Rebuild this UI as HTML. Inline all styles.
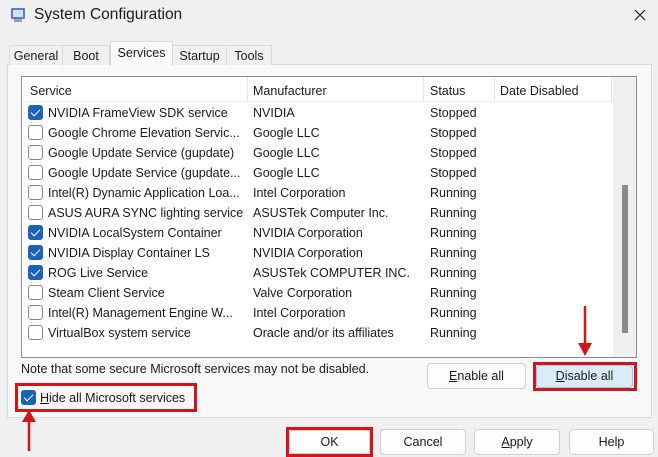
<!DOCTYPE html>
<html><head><style>
*{margin:0;padding:0;box-sizing:border-box}
body{width:658px;height:457px;background:#f0f0f0;font-family:"Liberation Sans",sans-serif;font-size:12.5px;color:#1a1a1a;position:relative;overflow:hidden}
.a{position:absolute}
.tab{position:absolute;top:45px;height:20px;border:1px solid #d9d9d9;border-bottom:none;background:#f0f0f0;padding:3px 0 0;text-align:center;font-size:12.5px}
.panel{position:absolute;left:7px;top:64px;width:645px;height:354px;background:#f9f9f9;border:1px solid #dadada}
.list{position:absolute;left:21px;top:76px;width:616px;height:282px;background:#fff;border:1px solid #8a8a8a}
.row{position:absolute;left:0;height:20px;width:590px}
.row span{position:absolute;top:3px;white-space:nowrap}
.cb{position:absolute;left:6px;top:2px;width:15px;height:15px;border:1px solid #8a8a8a;border-radius:3px;background:#fff}
.cb.on{background:#1a63b8;border-color:#1a63b8}
.cb.on::after{content:"";position:absolute;left:4px;top:1px;width:4px;height:8px;border:solid #fff;border-width:0 1.5px 1.5px 0;transform:rotate(45deg)}
.btn{position:absolute;height:26px;border:1px solid #d0d0d0;border-radius:4px;background:#fdfdfd;text-align:center;line-height:24px;font-size:12.5px}
.red{position:absolute;border:3px solid #d2141b}
</style></head><body>
<svg class="a" style="left:9px;top:7px" width="18" height="17" viewBox="0 0 18 17"><rect x="2" y="1" width="14" height="11" fill="#5a7fc0" rx="1"/><rect x="4" y="3" width="10" height="7" fill="#cfe0f7"/><rect x="5" y="12" width="8" height="3" fill="#8da0c0"/></svg>
<div class="a" style="left:34px;top:6px;font-size:15.5px">System Configuration</div>
<svg class="a" style="left:634px;top:9px" width="12" height="12"><path d="M1 1L11 11M11 1L1 11" stroke="#222" stroke-width="1.2"/></svg>
<div class="panel"></div>
<div class="tab" style="left:9px;width:54px">General</div>
<div class="tab" style="left:62px;width:48px">Boot</div>
<div class="tab" style="left:172px;width:55px">Startup</div>
<div class="tab" style="left:226px;width:46px">Tools</div>
<div class="tab" style="left:110px;top:41px;height:25px;width:63px;background:#f9f9f9;padding-top:4px">Services</div>
<div class="list">
<div class="a" style="left:0;top:0;width:590px;height:25px;border-bottom:1px solid #f0f0f0"></div>
<div class="a" style="left:8px;top:7px">Service</div>
<div class="a" style="left:225px;top:0;height:25px;border-left:1px solid #e5e5e5"></div>
<div class="a" style="left:231px;top:7px">Manufacturer</div>
<div class="a" style="left:401px;top:0;height:25px;border-left:1px solid #e5e5e5"></div>
<div class="a" style="left:408px;top:7px">Status</div>
<div class="a" style="left:472px;top:0;height:25px;border-left:1px solid #e5e5e5"></div>
<div class="a" style="left:478px;top:7px">Date Disabled</div>
<div class="a" style="left:589px;top:0;height:25px;border-left:1px solid #e5e5e5"></div>
<div class="a" style="left:591px;top:0;width:23px;height:280px;background:#f0f0f0"></div>
<div class="a" style="left:600px;top:108px;width:6px;height:148px;background:#8a8a8a"></div>
<div class="row" style="top:26px"><div class="cb on"></div><span style="left:26px">NVIDIA FrameView SDK service</span><span style="left:231px">NVIDIA</span><span style="left:408px">Stopped</span></div>
<div class="row" style="top:46px"><div class="cb"></div><span style="left:26px">Google Chrome Elevation Servic...</span><span style="left:231px">Google LLC</span><span style="left:408px">Stopped</span></div>
<div class="row" style="top:66px"><div class="cb"></div><span style="left:26px">Google Update Service (gupdate)</span><span style="left:231px">Google LLC</span><span style="left:408px">Stopped</span></div>
<div class="row" style="top:86px"><div class="cb"></div><span style="left:26px">Google Update Service (gupdate...</span><span style="left:231px">Google LLC</span><span style="left:408px">Stopped</span></div>
<div class="row" style="top:106px"><div class="cb"></div><span style="left:26px">Intel(R) Dynamic Application Loa...</span><span style="left:231px">Intel Corporation</span><span style="left:408px">Running</span></div>
<div class="row" style="top:126px"><div class="cb"></div><span style="left:26px">ASUS AURA SYNC lighting service</span><span style="left:231px">ASUSTek Computer Inc.</span><span style="left:408px">Running</span></div>
<div class="row" style="top:146px"><div class="cb on"></div><span style="left:26px">NVIDIA LocalSystem Container</span><span style="left:231px">NVIDIA Corporation</span><span style="left:408px">Running</span></div>
<div class="row" style="top:166px"><div class="cb on"></div><span style="left:26px">NVIDIA Display Container LS</span><span style="left:231px">NVIDIA Corporation</span><span style="left:408px">Running</span></div>
<div class="row" style="top:186px"><div class="cb on"></div><span style="left:26px">ROG Live Service</span><span style="left:231px">ASUSTek COMPUTER INC.</span><span style="left:408px">Running</span></div>
<div class="row" style="top:206px"><div class="cb"></div><span style="left:26px">Steam Client Service</span><span style="left:231px">Valve Corporation</span><span style="left:408px">Running</span></div>
<div class="row" style="top:226px"><div class="cb"></div><span style="left:26px">Intel(R) Management Engine W...</span><span style="left:231px">Intel Corporation</span><span style="left:408px">Running</span></div>
<div class="row" style="top:246px"><div class="cb"></div><span style="left:26px">VirtualBox system service</span><span style="left:231px">Oracle and/or its affiliates</span><span style="left:408px">Running</span></div>
</div>
<div class="a" style="left:21px;top:362px">Note that some secure Microsoft services may not be disabled.</div>
<div class="btn" style="left:427px;top:363px;width:99px"><u>E</u>nable all</div>
<div class="btn" style="left:536px;top:365px;width:97px;height:23px;line-height:21px;background:#dcebfa;border-color:#9cc3ea"><u>D</u>isable all</div>
<div class="red" style="left:533px;top:362px;width:104px;height:29px"></div>
<div class="red" style="left:15px;top:383px;width:182px;height:29px"></div>
<div class="cb on" style="left:21px;top:390px"></div>
<div class="a" style="left:40px;top:391px"><u>H</u>ide all Microsoft services</div>
<svg class="a" style="left:19px;top:410px" width="20" height="42"><path d="M10 41V8" stroke="#d2141b" stroke-width="2.5"/><path d="M3 12L10 0L17 12Z" fill="#d2141b"/></svg>
<svg class="a" style="left:575px;top:306px" width="20" height="50"><path d="M10 0V40" stroke="#d2141b" stroke-width="2.5"/><path d="M3 37L10 50L17 37Z" fill="#d2141b"/></svg>
<div class="btn" style="left:289px;top:430px;width:81px;height:24px;line-height:22px">OK</div>
<div class="red" style="left:286px;top:427px;width:87px;height:30px"></div>
<div class="btn" style="left:380px;top:429px;width:86px">Cancel</div>
<div class="btn" style="left:474px;top:429px;width:86px"><u>A</u>pply</div>
<div class="btn" style="left:569px;top:429px;width:85px">Help</div>
</body></html>
